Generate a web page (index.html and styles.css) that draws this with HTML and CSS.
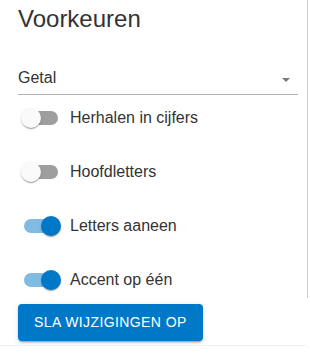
FILE: index.html
```html
<!DOCTYPE html>
<html lang="nl">
<head>
<meta charset="utf-8">
<title>Voorkeuren</title>
<link rel="stylesheet" href="styles.css">
</head>
<body>
<div class="panel">
  <h1 class="title">Voorkeuren</h1>
  <div class="select">
    <span class="select-value">Getal</span>
    <span class="select-arrow"></span>
  </div>
  <div class="rows">
    <label class="row">
      <span class="switch"><span class="track"></span><span class="thumb"></span></span>
      <span class="label">Herhalen in cijfers</span>
    </label>
    <label class="row">
      <span class="switch"><span class="track"></span><span class="thumb"></span></span>
      <span class="label">Hoofdletters</span>
    </label>
    <label class="row">
      <span class="switch on"><span class="track"></span><span class="thumb"></span></span>
      <span class="label">Letters aaneen</span>
    </label>
    <label class="row">
      <span class="switch on"><span class="track"></span><span class="thumb"></span></span>
      <span class="label">Accent op één</span>
    </label>
  </div>
  <button class="save">Sla wijzigingen op</button>
</div>
<div class="footer"></div>
</body>
</html>
```
FILE: styles.css
```css
* { box-sizing: border-box; }
html, body {
  margin: 0;
  padding: 0;
  background: #fff;
  font-family: "Liberation Sans", Arial, sans-serif;
  color: #333;
}
.panel {
  width: 308px;
  height: 298px;
  border-right: 1px solid #cfcfcf;
  padding: 3px 0 0 18px;
}
.title {
  margin: 0;
  font-size: 24px;
  line-height: 32px;
  font-weight: 400;
  color: #333;
}
.select {
  margin-top: 31px;
  width: 280px;
  height: 29px;
  padding-bottom: 4px;
  border-bottom: 1px solid #b3b3b3;
  display: flex;
  justify-content: space-between;
  align-items: flex-start;
}
.select-value {
  font-size: 16px;
  line-height: 24px;
  color: #333;
}
.select-arrow {
  width: 0;
  height: 0;
  margin: 12px 8px 0 0;
  border-left: 4px solid transparent;
  border-right: 4px solid transparent;
  border-top: 4px solid #7a7a7a;
}
.rows {
  margin-top: 4px;
  margin-left: -6px;
  display: flex;
  flex-direction: column;
  gap: 16px;
}
.row {
  display: flex;
  align-items: center;
  height: 38px;
}
.switch {
  position: relative;
  width: 58px;
  height: 38px;
  flex: none;
}
.track {
  position: absolute;
  left: 12px;
  top: 12px;
  width: 34px;
  height: 14px;
  border-radius: 7px;
  background: #9e9e9e;
}
.thumb {
  position: absolute;
  left: 9px;
  top: 9px;
  width: 20px;
  height: 20px;
  border-radius: 50%;
  background: #fafafa;
  box-shadow: 0 2px 1px -1px rgba(0,0,0,.2), 0 1px 1px 0 rgba(0,0,0,.14), 0 1px 3px 0 rgba(0,0,0,.12);
}
.switch.on .track { background: #80bbe3; }
.switch.on .thumb { left: 29px; background: #0078c8; }
.label {
  font-size: 16px;
  line-height: 24px;
  color: #333;
}
.save {
  margin-top: 5px;
  display: block;
  height: 37px;
  padding: 0 16px;
  border: 0;
  border-radius: 4px;
  background: #0078c8;
  color: #fff;
  font-family: "Liberation Sans", Arial, sans-serif;
  font-size: 14px;
  letter-spacing: 0.4px;
  text-transform: uppercase;
  line-height: 37px;
  box-shadow: 0 3px 1px -2px rgba(0,0,0,.2), 0 2px 2px 0 rgba(0,0,0,.14), 0 1px 5px 0 rgba(0,0,0,.12);
}
.footer {
  margin-top: 47px;
  width: 308px;
  height: 4px;
  border-top: 1px solid #f0f0f0;
  border-right: 1px solid #f3f3f3;
  border-top-right-radius: 4px;
}
```
